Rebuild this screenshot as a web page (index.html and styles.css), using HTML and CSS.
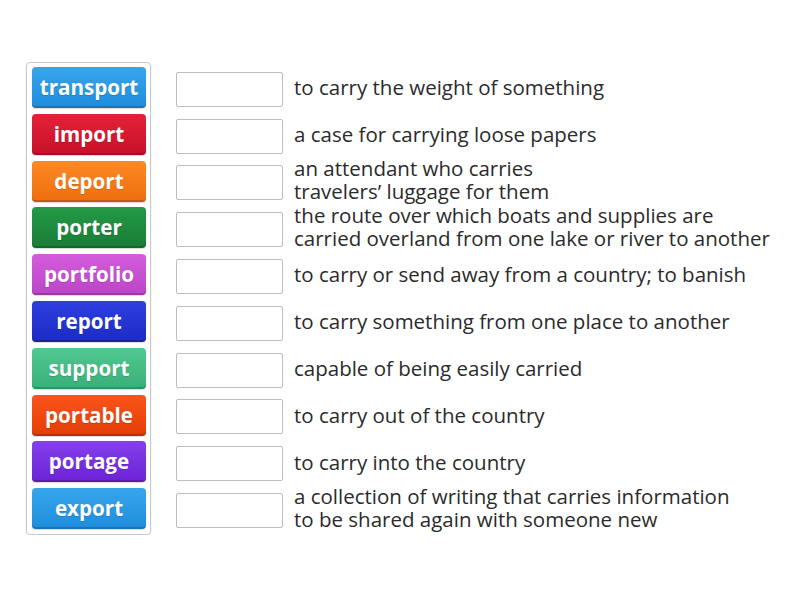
FILE: index.html
```html
<!DOCTYPE html>
<html>
<head>
<meta charset="utf-8">
<link rel="stylesheet" href="styles.css">
</head>
<body>
<div class="page">
  <div class="bank">
    <div class="tile c-blue">transport</div>
    <div class="tile c-red">import</div>
    <div class="tile c-orange">deport</div>
    <div class="tile c-green">porter</div>
    <div class="tile c-magenta">portfolio</div>
    <div class="tile c-navy">report</div>
    <div class="tile c-mint">support</div>
    <div class="tile c-vermil">portable</div>
    <div class="tile c-purple">portage</div>
    <div class="tile c-blue">export</div>
  </div>
  <div class="rows">
    <div class="row"><div class="slot"></div><div class="def">to carry the weight of something</div></div>
    <div class="row"><div class="slot"></div><div class="def">a case for carrying loose papers</div></div>
    <div class="row"><div class="slot"></div><div class="def two">an attendant who carries<br>travelers’ luggage for them</div></div>
    <div class="row"><div class="slot"></div><div class="def two">the route over which boats and supplies are<br>carried overland from one lake or river to another</div></div>
    <div class="row"><div class="slot"></div><div class="def">to carry or send away from a country; to banish</div></div>
    <div class="row"><div class="slot"></div><div class="def">to carry something from one place to another</div></div>
    <div class="row"><div class="slot"></div><div class="def">capable of being easily carried</div></div>
    <div class="row"><div class="slot"></div><div class="def">to carry out of the country</div></div>
    <div class="row"><div class="slot"></div><div class="def">to carry into the country</div></div>
    <div class="row"><div class="slot"></div><div class="def two">a collection of writing that carries information<br>to be shared again with someone new</div></div>
  </div>
</div>
</body>
</html>
```

FILE: styles.css
```css
html, body {
  margin: 0;
  padding: 0;
  background: #ffffff;
}
body {
  font-family: "Open Sans", "Liberation Sans", sans-serif;
  color: #2b2b2b;
}
.page {
  display: flex;
  align-items: flex-start;
  padding: 62px 0 0 26px;
}
.bank {
  width: 125px;
  box-sizing: border-box;
  border: 1px solid #c8c8c8;
  border-radius: 4px;
  padding: 4px 4px 5px 5px;
  display: flex;
  flex-direction: column;
  gap: 5.8px;
  box-shadow: 0 1px 2px rgba(0,0,0,0.12);
}
.tile {
  height: 41px;
  width: 114px;
  box-sizing: border-box;
  border-radius: 4px;
  color: #fff;
  font-weight: 700;
  font-size: 20.6px;
  display: flex;
  align-items: center;
  justify-content: center;
  padding-bottom: 1px;
  text-shadow: 0 1px 1px rgba(0,0,0,0.15);
  box-shadow: inset 0 -2px 0 rgba(0,0,0,0.18), 0 1px 1px rgba(0,0,0,0.15);
}
.c-blue { background: linear-gradient(#36a6ec, #1f8ddb); }
.c-red { background: linear-gradient(#e32238, #c8102a); }
.c-orange { background: linear-gradient(#fb8a26, #ef6e0c); }
.c-green { background: linear-gradient(#239a46, #197c37); }
.c-magenta { background: linear-gradient(#d35ddb, #bc44c7); }
.c-navy { background: linear-gradient(#2e3fe0, #1d2bc4); }
.c-mint { background: linear-gradient(#52c991, #3aae78); }
.c-vermil { background: linear-gradient(#fa541a, #e23d05); }
.c-purple { background: linear-gradient(#8540ea, #6b22d6); }
.rows {
  margin-left: 25px;
  padding-top: 4px;
  display: flex;
  flex-direction: column;
}
.row {
  height: 46.8px;
  display: flex;
  align-items: center;
}
.slot {
  width: 107px;
  height: 35px;
  box-sizing: border-box;
  border: 1px solid #bdbdbd;
  border-radius: 2px;
  background: #fff;
  flex-shrink: 0;
}
.def {
  margin-left: 11px;
  font-size: 20.5px;
  line-height: 22.5px;
  white-space: nowrap;
  margin-top: -4px;
}
.def.two {
  margin-top: -6px;
}
```
